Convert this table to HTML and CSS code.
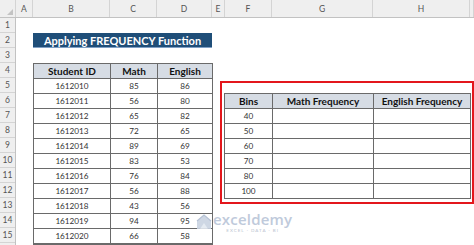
FILE: index.html
```html
<!DOCTYPE html>
<html>
<head>
<meta charset="utf-8">
<link rel="stylesheet" href="styles.css">
</head>
<body>
<div class="sheet">
  <div class="colhdr">
    <div class="corner"><span class="tri"></span></div>
    <div>A</div><div>B</div><div>C</div><div>D</div><div>E</div><div>F</div><div>G</div><div>H</div><div></div>
  </div>
  <div class="body">
    <div class="rowhdr">
      <div>1</div><div>2</div><div>3</div><div>4</div><div>5</div><div>6</div><div>7</div><div>8</div>
      <div>9</div><div>10</div><div>11</div><div>12</div><div>13</div><div>14</div><div>15</div><div></div>
    </div>
    <div class="cells">
      <div class="title">Applying FREQUENCY Function</div>
      <div class="tbl students">
        <div class="th">Student ID</div><div class="th">Math</div><div class="th">English</div>
        <div>1612010</div><div>85</div><div>86</div>
        <div>1612011</div><div>56</div><div>80</div>
        <div>1612012</div><div>65</div><div>82</div>
        <div>1612013</div><div>72</div><div>65</div>
        <div>1612014</div><div>89</div><div>69</div>
        <div>1612015</div><div>83</div><div>53</div>
        <div>1612016</div><div>76</div><div>84</div>
        <div>1612017</div><div>56</div><div>88</div>
        <div>1612018</div><div>43</div><div>56</div>
        <div>1612019</div><div>94</div><div>95</div>
        <div>1612020</div><div>66</div><div>58</div>
      </div>
      <div class="redbox">
        <div class="tbl bins">
          <div class="th">Bins</div><div class="th">Math Frequency</div><div class="th">English Frequency</div>
          <div>40</div><div></div><div></div>
          <div>50</div><div></div><div></div>
          <div>60</div><div></div><div></div>
          <div>70</div><div></div><div></div>
          <div>80</div><div></div><div></div>
          <div>100</div><div></div><div></div>
        </div>
      </div>
    </div>
  </div>
  <div class="watermark">
    <svg class="wm-icon" width="16" height="16" viewBox="0 0 16 16">
      <path d="M1 7 L8 1 L15 7 L15 15 L1 15 Z" fill="#c9d3e2"/>
      <path d="M4 15 L8 9 L12 15 Z" fill="#e3e9f1"/>
      <path d="M1 7 L8 1 L15 7" fill="none" stroke="#aebbd0" stroke-width="1.2"/>
    </svg>
    <div class="wm-text">
      <span class="wm-name">exceldemy</span>
      <span class="wm-sub">EXCEL · DATA · BI</span>
    </div>
  </div>
</div>
</body>
</html>
```

FILE: styles.css
```css
* { box-sizing: border-box; margin: 0; padding: 0; }
body {
  margin: 0;
  width: 474px;
  height: 245px;
  overflow: hidden;
  background: #fff;
  font-family: Lato, "Liberation Sans", sans-serif;
}
.sheet {
  position: relative;
  width: 474px;
  height: 245px;
  overflow: hidden;
}
.colhdr {
  display: grid;
  grid-template-columns: 16px 17px 77px 47px 55px 13px 47px 101px 97px 1fr;
  height: 18px;
  background: #efefef;
  border-bottom: 1px solid #c2c2c2;
}
.colhdr > div {
  border-right: 1px solid #d4d4d4;
  display: flex;
  align-items: center;
  justify-content: center;
  font-size: 8.5px;
  color: #555;
}
.corner { position: relative; }
.tri {
  position: absolute;
  right: 2px;
  bottom: 2px;
  width: 0;
  height: 0;
  border-left: 6px solid transparent;
  border-bottom: 6px solid #c3c3c3;
}
.body { display: flex; }
.rowhdr {
  width: 16px;
  background: #efefef;
  border-right: 1px solid #c2c2c2;
  display: grid;
  grid-template-rows: repeat(16, 15px);
}
.rowhdr > div {
  border-bottom: 1px solid #d4d4d4;
  font-size: 8.5px;
  color: #555;
  display: flex;
  align-items: center;
  justify-content: center;
}
.cells {
  flex: 1;
  display: grid;
  grid-template-columns: 17px 77px 47px 55px 13px 47px 101px 97px 1fr;
  grid-template-rows: repeat(16, 15px);
}
.title {
  grid-column: 2 / 5;
  grid-row: 2;
  background: #1f4e78;
  border-bottom: 1px solid #7f9fc4;
  color: #fff;
  font-weight: 700;
  font-size: 11px;
  display: flex;
  align-items: center;
  justify-content: center;
}
.tbl {
  display: grid;
  gap: 1px;
  background: #6a6a6a;
  border: 1px solid #6a6a6a;
  grid-auto-rows: 14px;
  justify-self: start;
  align-self: start;
}
.tbl > div {
  background: #fff;
  font-size: 8.2px;
  color: #333;
  display: flex;
  align-items: center;
  justify-content: center;
}
.tbl > .th {
  background: #d6dce4;
  color: #111;
  font-weight: 700;
  font-size: 10px;
}
.students {
  grid-column: 2 / 5;
  grid-row: 4 / 17;
  grid-template-columns: 76px 46px 54px;
  border-bottom-width: 2px;
}
.redbox {
  grid-column: 5 / -1;
  grid-row: 5 / 15;
  justify-self: start;
  align-self: start;
  margin: 3px 0 0 8px;
  width: 254px;
  height: 123px;
  border: 2px solid #e3161c;
  padding: 10px 0 0 2px;
}
.bins {
  grid-template-columns: 47px 100px 96px;
}
.watermark {
  position: absolute;
  left: 196px;
  top: 211px;
  display: flex;
  align-items: center;
  gap: 1px;
  opacity: 0.9;
}
.wm-text {
  display: flex;
  flex-direction: column;
  align-items: center;
}
.wm-name {
  font-family: "Open Sans", sans-serif;
  font-size: 15px;
  line-height: 17px;
  font-weight: 600;
  color: #b9c5d8;
  letter-spacing: 0.2px;
}
.wm-sub {
  font-size: 4.5px;
  line-height: 5px;
  color: #b3bdcc;
  letter-spacing: 1px;
}
```
